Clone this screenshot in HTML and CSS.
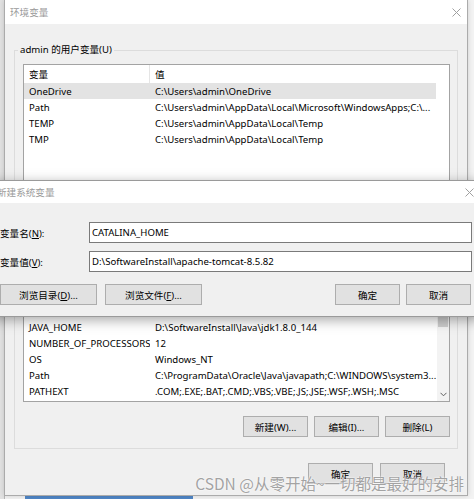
FILE: index.html
```html
<!DOCTYPE html>
<html lang="zh-CN">
<head>
<meta charset="utf-8">
<title>环境变量</title>
<link rel="stylesheet" href="styles.css">
</head>
<body>
<div class="desktop">
  <div class="bg-strip"></div>
  <div class="task-strip"></div>

  <section class="win main-win">
    <header class="titlebar">
      <span class="title">环境变量</span>
      <svg class="close" width="9" height="9" viewBox="0 0 9 9"><path d="M0.5 0.5 L8.5 8.5 M8.5 0.5 L0.5 8.5" /></svg>
    </header>
    <div class="win-body">
      <fieldset class="group">
        <legend>admin 的用户变量(U)</legend>
        <div class="listbox user-list">
          <div class="lv">
            <div class="lv-head"><span class="c1">变量</span><span class="c2">值</span></div>
            <div class="lv-row sel"><span class="c1">OneDrive</span><span class="c2">C:\Users\admin\OneDrive</span></div>
            <div class="lv-row"><span class="c1">Path</span><span class="c2">C:\Users\admin\AppData\Local\Microsoft\WindowsApps;C:\...</span></div>
            <div class="lv-row"><span class="c1">TEMP</span><span class="c2">C:\Users\admin\AppData\Local\Temp</span></div>
            <div class="lv-row"><span class="c1">TMP</span><span class="c2">C:\Users\admin\AppData\Local\Temp</span></div>
          </div>
        </div>
        <div class="btn-row">
          <button class="btn">新建(N)...</button>
          <button class="btn">编辑(E)...</button>
          <button class="btn">删除(D)</button>
        </div>
      </fieldset>

      <fieldset class="group sys">
        <legend>系统变量(S)</legend>
        <div class="listbox sys-list">
          <div class="lv">
            <div class="lv-head"><span class="c1">变量</span><span class="c2">值</span></div>
            <div class="lv-rows scrolled">
              <div class="lv-row"><span class="c1">DriverData</span><span class="c2">C:\Windows\System32\Drivers\DriverData</span></div>
              <div class="lv-row"><span class="c1">JAVA_HOME</span><span class="c2">D:\SoftwareInstall\Java\jdk1.8.0_144</span></div>
              <div class="lv-row"><span class="c1">NUMBER_OF_PROCESSORS</span><span class="c2">12</span></div>
              <div class="lv-row"><span class="c1">OS</span><span class="c2">Windows_NT</span></div>
              <div class="lv-row"><span class="c1">Path</span><span class="c2">C:\ProgramData\Oracle\Java\javapath;C:\WINDOWS\system3...</span></div>
              <div class="lv-row"><span class="c1">PATHEXT</span><span class="c2">.COM;.EXE;.BAT;.CMD;.VBS;.VBE;.JS;.JSE;.WSF;.WSH;.MSC</span></div>
            </div>
          </div>
          <div class="vscroll">
            <div class="thumb"></div>
            <svg class="arrow" width="7" height="5" viewBox="0 0 7 5"><path d="M0.5 0.8 L3.5 3.8 L6.5 0.8" /></svg>
          </div>
        </div>
        <div class="btn-row">
          <button class="btn">新建(W)...</button>
          <button class="btn">编辑(I)...</button>
          <button class="btn">删除(L)</button>
        </div>
      </fieldset>

      <div class="btn-row foot">
        <button class="btn">确定</button>
        <button class="btn">取消</button>
      </div>
    </div>
  </section>

  <section class="win dialog">
    <header class="titlebar">
      <span class="title">新建系统变量</span>
      <svg class="close" width="9" height="9" viewBox="0 0 9 9"><path d="M0.5 0.5 L8.5 8.5 M8.5 0.5 L0.5 8.5" /></svg>
    </header>
    <div class="dlg-body">
      <div class="form">
        <label class="lbl">变量名(<u>N</u>):</label>
        <div class="input">CATALINA_HOME</div>
        <label class="lbl">变量值(<u>V</u>):</label>
        <div class="input">D:\SoftwareInstall\apache-tomcat-8.5.82</div>
      </div>
      <div class="dlg-buttons">
        <button class="btn wide">浏览目录(<u>D</u>)...</button>
        <button class="btn wide">浏览文件(<u>F</u>)...</button>
        <button class="btn push">确定</button>
        <button class="btn">取消</button>
      </div>
    </div>
  </section>

  <div class="watermark">CSDN @从零开始~一切都是最好的安排</div>
</div>
</body>
</html>
```

FILE: styles.css
```css
* { box-sizing: border-box; }
html, body { margin: 0; padding: 0; }
body {
  width: 474px;
  height: 499px;
  overflow: hidden;
  font-family: "Noto Sans", "Noto Sans CJK SC", sans-serif;
  font-size: 9.6px;
  color: #000;
}
.desktop {
  position: relative;
  width: 474px;
  height: 499px;
  overflow: hidden;
  background: #f3f3f3;
}
.bg-strip {
  position: absolute;
  left: 0;
  top: 0;
  width: 5px;
  height: 499px;
  background: #e2e2e2;
  border-right: 1px solid #b8b8b8;
}
.task-strip {
  position: absolute;
  left: 25px;
  bottom: 0;
  width: 168px;
  height: 3px;
  background: #4f86c6;
}
.win {
  position: absolute;
  display: flex;
  flex-direction: column;
}
.main-win {
  left: 4px;
  top: 0;
  width: 464px;
  height: 496px;
  background: #f0f0f0;
  border: 1px solid #ababab;
  border-top: 0;
  box-shadow: 0 0 5px rgba(0, 0, 0, 0.15);
}
.titlebar {
  flex: none;
  height: 24px;
  background: #fff;
  display: flex;
  align-items: center;
  justify-content: space-between;
  padding: 0 6px 0 5px;
}
.title { color: #9a9a9a; }
.close path { stroke: #a0a0a0; stroke-width: 1; fill: none; }

.win-body {
  flex: 1;
  display: flex;
  flex-direction: column;
  padding: 18px 9px 11px 9px;
}
.group {
  margin: 0;
  min-width: 0;
  border: 1px solid #dcdcdc;
  padding: 6px 7px 10px 8px;
}
.group legend {
  padding: 0 2px;
  margin-left: -5px;
  line-height: 16px;
}
.group.sys {
  margin-top: 2px;
  padding-bottom: 11px;
}
.listbox {
  display: flex;
  background: #fff;
  border: 1px solid #a3a3a3;
  overflow: hidden;
}
.user-list { height: 136px; }
.sys-list { height: 134px; }
.lv {
  flex: 1;
  min-width: 0;
  display: flex;
  flex-direction: column;
}
.lv-rows {
  display: flex;
  flex-direction: column;
}
.lv-rows.scrolled { padding-top: 16px; }
.lv-head, .lv-row {
  display: flex;
  flex: none;
  width: 412px;
  white-space: nowrap;
}
.lv-head { height: 18px; align-items: center; }
.lv-row { height: 16px; align-items: center; }
.lv-row.sel { background: #e3e3e3; }
.c1 {
  width: 126px;
  flex: none;
  padding-left: 5px;
  overflow: hidden;
}
.c2 {
  flex: 1;
  padding-left: 5px;
  overflow: hidden;
}
.lv-head .c1 {
  height: 100%;
  display: flex;
  align-items: center;
  border-right: 1px solid #e5e5e5;
}
.vscroll {
  flex: none;
  width: 12px;
  background: #f3f3f3;
  display: flex;
  flex-direction: column;
  align-items: center;
  padding-top: 36px;
  padding-bottom: 4px;
}
.thumb {
  width: 10px;
  height: 22px;
  background: #cdcdcd;
}
.arrow { margin-top: auto; }
.arrow path { stroke: #606060; stroke-width: 1; fill: none; }

.btn-row {
  display: flex;
  justify-content: flex-end;
  gap: 6px;
  margin-top: 12px;
}
.group.sys .btn-row { margin-top: 14px; }
.btn {
  height: 21px;
  width: 65px;
  margin: 0;
  padding: 0;
  border: 1px solid #adadad;
  background: #e1e1e1;
  font: inherit;
  color: #000;
}
.btn-row.foot {
  margin-top: auto;
  margin-right: 13px;
  gap: 7px;
}

.dialog {
  left: -12px;
  top: 180px;
  width: 495px;
  height: 137px;
  background: #f0f0f0;
  border: 1px solid #9a9a9a;
  box-shadow: 0 3px 12px rgba(0, 0, 0, 0.35);
}
.dialog .titlebar {
  height: 22px;
  padding: 0 8px 0 8px;
}
.dlg-body {
  flex: 1;
  display: flex;
  flex-direction: column;
  padding: 19px 10px 11px 11px;
}
.form {
  display: grid;
  grid-template-columns: 89px 1fr;
  row-gap: 8px;
  align-items: center;
}
.input {
  height: 21px;
  background: #fff;
  border: 1px solid #7a7a7a;
  padding-left: 2px;
  display: flex;
  align-items: center;
  white-space: nowrap;
}
.dlg-buttons {
  display: flex;
  gap: 8px;
  margin-top: 12px;
  margin-right: 1px;
}
.btn.wide { width: 97px; }
.btn.push { margin-left: auto; margin-right: -2px; }

.watermark {
  position: absolute;
  right: 10px;
  top: 473px;
  font-family: "Noto Sans CJK SC", sans-serif;
  font-size: 15.5px;
  line-height: 20px;
  color: #a3a3a3;
  text-shadow: 0 0 1px #fff, 0 0 2px #fff;
  white-space: nowrap;
}
```
